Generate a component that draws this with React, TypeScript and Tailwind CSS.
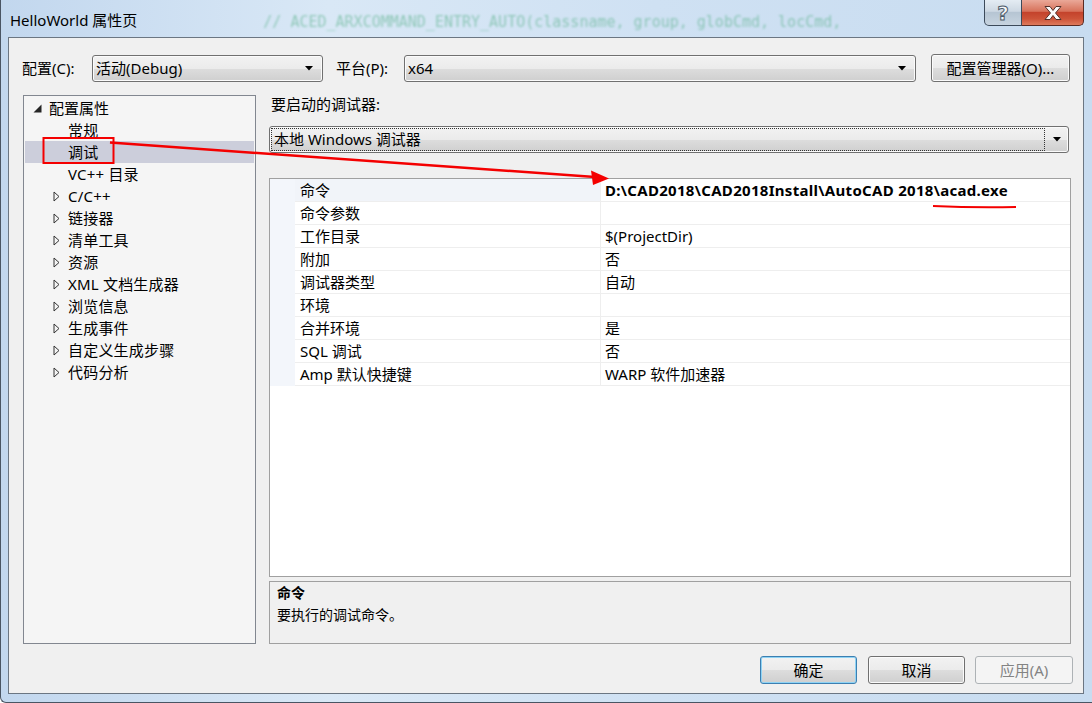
import React from "react";

const btn =
  "flex items-center justify-center h-[28px] rounded-[3px] border text-[15px] leading-none";
const normalBtn =
  "border-[#707070] bg-[linear-gradient(#f2f2f2_0%,#ebebeb_50%,#dddddd_50%,#cfcfcf_100%)] shadow-[inset_0_0_0_1px_#fbfbfb]";

function Arrow() {
  return (
    <svg width="8" height="5" viewBox="0 0 8 5">
      <polygon points="0,0 8,0 4,4.5" fill="#000" />
    </svg>
  );
}

function Combo({ text, className }: { text: string; className: string }) {
  return (
    <div className={`flex items-center h-[27px] pl-[3px] pr-[9px] ${normalBtn} border rounded-[3px] ${className}`}>
      <span className="flex-1 text-[15px] leading-none">{text}</span>
      <Arrow />
    </div>
  );
}

function Expanded() {
  return (
    <svg width="9" height="9" viewBox="0 0 9 9">
      <polygon points="8.5,0.5 8.5,8.5 0.5,8.5" fill="#262626" />
    </svg>
  );
}

function Collapsed() {
  return (
    <svg width="7" height="11" viewBox="0 0 7 11">
      <polygon points="1,1 6,5.5 1,10" fill="none" stroke="#333" strokeWidth="1" />
    </svg>
  );
}

const tree = [
  { label: "常规", kids: false },
  { label: "调试", kids: false, sel: true },
  { label: "VC++ 目录", kids: false },
  { label: "C/C++", kids: true },
  { label: "链接器", kids: true },
  { label: "清单工具", kids: true },
  { label: "资源", kids: true },
  { label: "XML 文档生成器", kids: true },
  { label: "浏览信息", kids: true },
  { label: "生成事件", kids: true },
  { label: "自定义生成步骤", kids: true },
  { label: "代码分析", kids: true },
];

const props: [string, string][] = [
  ["命令", "D:\\CAD2018\\CAD2018Install\\AutoCAD 2018\\acad.exe"],
  ["命令参数", ""],
  ["工作目录", "$(ProjectDir)"],
  ["附加", "否"],
  ["调试器类型", "自动"],
  ["环境", ""],
  ["合并环境", "是"],
  ["SQL 调试", "否"],
  ["Amp 默认快捷键", "WARP 软件加速器"],
];

export default function App() {
  return (
    <div className="relative w-[1092px] h-[703px] overflow-hidden flex flex-col font-['Noto_Sans','Noto_Sans_CJK_SC',sans-serif] text-[#000] bg-[linear-gradient(90deg,#c2d7ee_0%,#d9e8f6_30%,#cfe1f3_60%,#c8dcf0_100%)] border-l border-b border-[#4a5563] rounded-bl-[6px]">
      {/* title bar */}
      <div className="h-[37px] flex items-start shrink-0">
        <span className="mt-[9px] ml-[9px] text-[15px] leading-[22px] whitespace-nowrap">HelloWorld 属性页</span>
        <span className="mt-[12px] ml-[126px] font-['DejaVu_Sans_Mono',monospace] text-[15px] leading-[20px] text-[#5fb38f] opacity-60 blur-[1.2px] whitespace-nowrap">
          // ACED_ARXCOMMAND_ENTRY_AUTO(classname, group, globCmd, locCmd,
        </span>
        <div className="flex-1" />
        <div className="flex h-[26px] mr-[8px] shrink-0">
          <div className="w-[38px] h-full flex items-center justify-center border border-t-0 border-[#3c4a5a] rounded-bl-[5px] bg-[linear-gradient(#e4ecf3_0%,#cdd8e3_45%,#b6c5d3_50%,#c7d4e0_100%)]">
            <span className="text-[20px] leading-[24px] font-bold font-['DejaVu_Sans',sans-serif] text-[#f4f6f8] [-webkit-text-stroke:1px_#4d5a68]">?</span>
          </div>
          <div className="w-[62px] h-full flex items-center justify-center border border-t-0 border-l-0 border-[#5a2a22] rounded-br-[5px] bg-[linear-gradient(#eaa898_0%,#d7725b_45%,#c4432c_50%,#cd5338_75%,#de7a5c_100%)]">
            <svg width="20" height="16" viewBox="0 0 20 16">
              <polygon
                points="2,1.5 7,1.5 10,5.5 13,1.5 18,1.5 12.5,8 18,14.5 13,14.5 10,10.5 7,14.5 2,14.5 7.5,8"
                fill="#fbfbfb"
                stroke="#52302a"
                strokeWidth="1"
              />
            </svg>
          </div>
        </div>
      </div>

      {/* client area */}
      <div className="flex-1 mx-[7px] mb-[8px] mr-[8px] border border-[#6b7682] bg-[#f0f0f0] flex flex-col">
        {/* config row */}
        <div className="flex items-center mt-[16px] h-[28px] pl-[13px]">
          <span className="w-[70px] text-[15px]">配置(C):</span>
          <Combo text="活动(Debug)" className="w-[231px]" />
          <span className="w-[68px] ml-[13px] text-[15px]">平台(P):</span>
          <Combo text="x64" className="w-[512px]" />
          <div className={`${btn} ${normalBtn} w-[139px] ml-[15px]`}>配置管理器(O)...</div>
        </div>

        {/* main */}
        <div className="flex mt-[13px] h-[549px] pl-[14px]">
          {/* tree */}
          <div className="w-[233px] h-full border border-[#828790] bg-[#f5f5f5] pt-[1px] text-[15px]">
            <div className="flex items-center h-[22px]">
              <span className="w-[25px] pl-[9px] flex items-center"><Expanded /></span>
              <span>配置属性</span>
            </div>
            {tree.map((t) => (
              <div
                key={t.label}
                className={`flex items-center h-[22px] mx-[1px] ${t.sel ? "bg-[#cccedb]" : ""}`}
              >
                <span className="w-[43px] pl-[28px] flex items-center">{t.kids ? <Collapsed /> : null}</span>
                <span className="whitespace-nowrap tracking-[0.2px]">{t.label}</span>
              </div>
            ))}
          </div>

          {/* right column */}
          <div className="w-[802px] ml-[13px] flex flex-col">
            <div className="h-[18px] leading-[18px] pl-[2px] text-[15px]">要启动的调试器:</div>
            <div className={`mt-[13px] w-[800px] flex items-center h-[27px] border rounded-[3px] ${normalBtn}`}>
              <div className="flex-1 self-stretch m-[1px] border border-dotted border-[#333] flex items-center pl-[2px] text-[15px] leading-none">
                本地 Windows 调试器
              </div>
              <div className="w-[22px] flex justify-center"><Arrow /></div>
            </div>

            {/* property grid */}
            <div className="mt-[25px] h-[399px] border border-[#a0a0a0] bg-white text-[15px]">
              {props.map(([k, v], i) => (
                <div key={k} className="flex h-[23px]">
                  <div className="w-[25px] bg-[#f3f6fb]" />
                  <div className="flex-1 flex border-b border-[#eeeeee]">
                    <div
                      className={`w-[306px] pl-[5px] flex items-center border-r border-[#eeeeee] whitespace-nowrap ${i === 0 ? "bg-[#f1f4f9]" : ""}`}
                    >
                      {k}
                    </div>
                    <div className={`flex-1 pl-[4px] flex items-center whitespace-nowrap ${i === 0 ? "font-bold tracking-[0.3px]" : ""}`}>{v}</div>
                  </div>
                </div>
              ))}
            </div>

            {/* description */}
            <div className="mt-[4px] h-[63px] border border-[#a0a0a0] bg-[#f0f0f0] pl-[7px] text-[14px] leading-[22px]">
              <div className="font-bold">命令</div>
              <div>要执行的调试命令。</div>
            </div>
          </div>
        </div>

        {/* buttons */}
        <div className="flex justify-end mt-[12px] pr-[10px]">
          <div className={`${btn} w-[97px] border-[#3c7fb1] bg-[linear-gradient(#f2f2f2_0%,#ebebeb_50%,#dddddd_50%,#cfcfcf_100%)] shadow-[inset_0_0_0_1px_#8fd3f4]`}>确定</div>
          <div className={`${btn} ${normalBtn} w-[97px] ml-[11px]`}>取消</div>
          <div className={`${btn} w-[98px] ml-[10px] border-[#adb2b5] bg-[#f4f4f4] text-[#838383]`}>应用(A)</div>
        </div>
      </div>

      {/* red annotations drawn over the screenshot */}
      <svg className="absolute left-0 top-0 pointer-events-none" width="1092" height="703" viewBox="0 0 1092 703">
        <rect x="42.5" y="138" width="70" height="25" fill="none" stroke="#f40000" strokeWidth="2" />
        <line x1="109" y1="142.5" x2="594" y2="177" stroke="#f40000" strokeWidth="2.5" />
        <polygon points="590,170.5 592,185 608,178.5" fill="#f40000" />
        <path d="M932 206 Q975 208 1015 207" fill="none" stroke="#f40000" strokeWidth="2" />
      </svg>
    </div>
  );
}
